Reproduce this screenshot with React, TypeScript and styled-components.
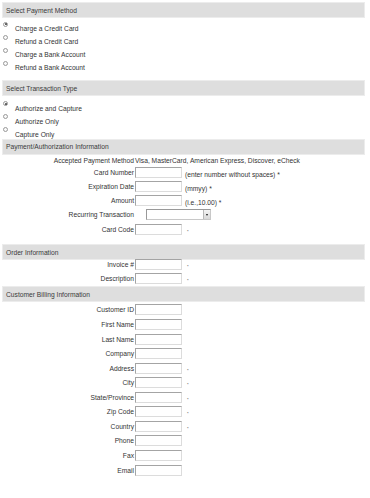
import React from 'react';
import styled, { createGlobalStyle } from 'styled-components';

const GlobalStyle = createGlobalStyle`
    html, body {
        margin: 0;
        padding: 0;
        background: #fff;
    }
    body {
        font-family: "Liberation Sans", Arial, Helvetica, sans-serif;
        color: #333;
    }
`;

const Page = styled.div`
    width: 363px;
    padding: 2px 0 0 2px;
    font-size: 6.7px;
`;

const SectionBar = styled.div<{ $top?: number }>`
    box-sizing: border-box;
    height: 16px;
    margin-top: ${ ({ $top }) => $top ?? 0 }px;
    padding-left: 3px;
    display: flex;
    align-items: center;
    background: #dedede;
    border: 1px solid #ececec;
    color: #3a3a3a;
`;

const RadioGroup = styled.div<{ $top: number; $bottom: number }>`
    display: flex;
    flex-direction: column;
    gap: 1.5px;
    padding: ${ ({ $top }) => $top }px 0 ${ ({ $bottom }) => $bottom }px;
`;

const RadioRow = styled.label`
    display: flex;
    align-items: flex-start;
    height: 11.5px;
`;

const RadioDot = styled.span<{ $checked?: boolean }>`
    position: relative;
    box-sizing: border-box;
    width: 5px;
    height: 5px;
    margin-left: 1px;
    border: 0.8px solid #9a9a9a;
    border-radius: 50%;
    background: #fafafa;

    &::after {
        content: '';
        display: ${ ({ $checked }) => ($checked ? 'block' : 'none') };
        position: absolute;
        left: 0.9px;
        top: 0.9px;
        width: 1.7px;
        height: 1.7px;
        border-radius: 50%;
        background: #555;
    }
`;

const RadioText = styled.span`
    margin: 2.5px 0 0 7px;
    line-height: 9px;
`;

const NoteRow = styled.div`
    display: grid;
    grid-template-columns: 132px auto;
    column-gap: 1px;
    height: 12px;
    line-height: 12px;
    white-space: nowrap;
`;

const NoteLabel = styled.span`
    text-align: right;
`;

const FieldList = styled.div<{ $row: number; $top?: number }>`
    display: grid;
    grid-auto-rows: ${ ({ $row }) => $row }px;
    margin-top: ${ ({ $top }) => $top ?? 0 }px;
`;

const FieldRow = styled.div`
    display: grid;
    grid-template-columns: 132px auto;
    column-gap: 1px;
    align-items: start;
`;

const Label = styled.span`
    text-align: right;
    line-height: 11px;
    white-space: nowrap;
`;

const Control = styled.div`
    display: flex;
    align-items: flex-start;
`;

const TextInput = styled.input`
    box-sizing: border-box;
    width: 47px;
    height: 11px;
    margin: 0;
    padding: 0 2px;
    border: 1px solid;
    border-color: #a4a4a4 #dcdcdc #dcdcdc #a4a4a4;
    background: #fff;
    font: inherit;
    outline: none;
`;

const Hint = styled.span`
    margin: 2px 0 0 3px;
    line-height: 11px;
    white-space: nowrap;
`;

const Required = styled.span`
    margin: 5px 0 0 5px;
    font-size: 4px;
    line-height: 6px;
`;

const SelectBox = styled.div`
    box-sizing: border-box;
    display: flex;
    justify-content: flex-end;
    width: 65px;
    height: 11px;
    margin-left: 11px;
    border: 1px solid;
    border-color: #999 #c8c8c8 #c8c8c8 #999;
    background: #fff;
`;

const SelectArrow = styled.span`
    box-sizing: border-box;
    display: flex;
    align-items: center;
    justify-content: center;
    width: 7px;
    height: 100%;
    border-left: 1px solid #b8b8b8;
    background: linear-gradient(#f4f4f4, #d8d8d8);

    &::after {
        content: '';
        border-left: 1.6px solid transparent;
        border-right: 1.6px solid transparent;
        border-top: 2px solid #111;
    }
`;

type Field = { label: string; hint?: string; required?: boolean; select?: boolean };

const paymentMethods = [
    'Charge a Credit Card',
    'Refund a Credit Card',
    'Charge a Bank Account',
    'Refund a Bank Account',
];

const transactionTypes = ['Authorize and Capture', 'Authorize Only', 'Capture Only'];

const cardFields: Field[] = [
    { label: 'Card Number', hint: '(enter number without spaces) *' },
    { label: 'Expiration Date', hint: '(mmyy) *' },
    { label: 'Amount', hint: '(i.e.,10.00) *' },
    { label: 'Recurring Transaction', select: true },
    { label: 'Card Code', required: true },
];

const orderFields: Field[] = [
    { label: 'Invoice #', required: true },
    { label: 'Description', required: true },
];

const billingFields: Field[] = [
    { label: 'Customer ID' },
    { label: 'First Name' },
    { label: 'Last Name' },
    { label: 'Company' },
    { label: 'Address', required: true },
    { label: 'City', required: true },
    { label: 'State/Province', required: true },
    { label: 'Zip Code', required: true },
    { label: 'Country', required: true },
    { label: 'Phone' },
    { label: 'Fax' },
    { label: 'Email' },
];

function Radios({ items, top, bottom }: { items: string[]; top: number; bottom: number }) {
    return (
        <RadioGroup $top={ top } $bottom={ bottom }>
            {
                items.map((item, index) => (
                    <RadioRow key={ item }>
                        <RadioDot $checked={ index === 0 } />
                        <RadioText>{ item }</RadioText>
                    </RadioRow>
                ))
            }
        </RadioGroup>
    );
}

function Fields({ fields, row, top }: { fields: Field[]; row: number; top?: number }) {
    return (
        <FieldList $row={ row } $top={ top }>
            {
                fields.map(({ label, hint, required, select }) => (
                    <FieldRow key={ label }>
                        <Label>{ label }</Label>
                        <Control>
                            { select ? (
                                <SelectBox>
                                    <SelectArrow />
                                </SelectBox>
                            ) : (
                                <TextInput type="text" aria-label={ label } />
                            ) }
                            { hint && <Hint>{ hint }</Hint> }
                            { required && <Required>*</Required> }
                        </Control>
                    </FieldRow>
                ))
            }
        </FieldList>
    );
}

export default function App() {
    return (
        <>
            <GlobalStyle />
            <Page>
                <SectionBar>Select Payment Method</SectionBar>
                <Radios items={ paymentMethods } top={ 3.5 } bottom={ 8 } />

                <SectionBar>Select Transaction Type</SectionBar>
                <Radios items={ transactionTypes } top={ 5 } bottom={ 0 } />

                <SectionBar>Payment/Authorization Information</SectionBar>
                <NoteRow>
                    <NoteLabel>Accepted Payment Method</NoteLabel>
                    <span>Visa, MasterCard, American Express, Discover, eCheck</span>
                </NoteRow>
                <Fields fields={ cardFields } row={ 14.3 } />

                <SectionBar $top={ 6.5 }>Order Information</SectionBar>
                <Fields fields={ orderFields } row={ 13.5 } top={ -1 } />

                <SectionBar>Customer Billing Information</SectionBar>
                <Fields fields={ billingFields } row={ 14.55 } top={ 2 } />
            </Page>
        </>
    );
}
